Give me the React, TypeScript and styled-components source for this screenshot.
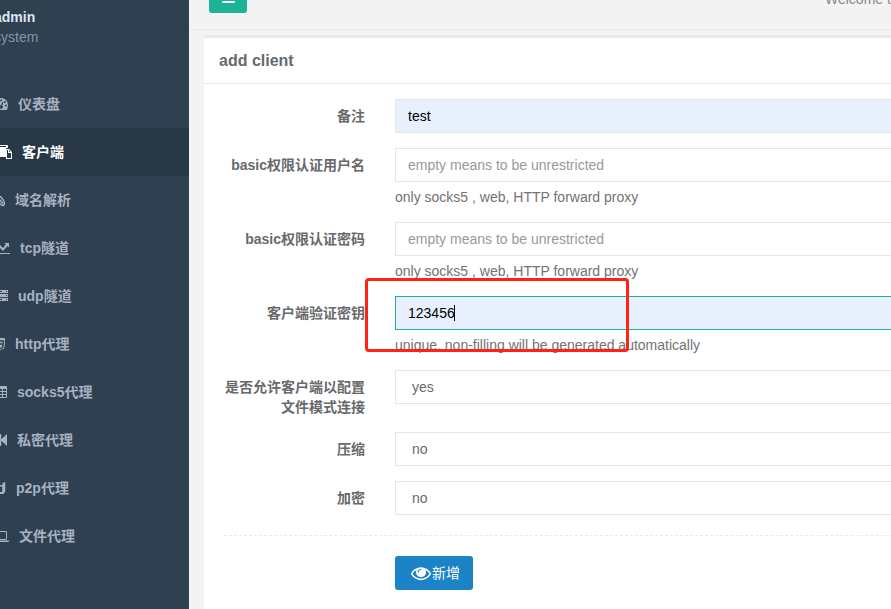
import React from "react";
import styled, { createGlobalStyle } from "styled-components";

const GlobalStyle = createGlobalStyle`
  * { box-sizing: border-box; }
  body {
    margin: 0;
    overflow: hidden;
    background: #f3f3f4;
    color: #676a6c;
    font: 14px/20px "Liberation Sans", Arial, "Noto Sans CJK SC", sans-serif;
  }
`;

const Shell = styled.div`
  display: flex;
  width: 891px;
  height: 609px;
  overflow: hidden;
`;

const Sidebar = styled.nav`
  flex: 0 0 220px;
  margin-left: -31px;
  height: 609px;
  background: #2f4050;
`;

const Profile = styled.div`
  height: 80px;
  padding: 7px 0 0 25px;
`;

const UserName = styled.div`
  color: #dfe4ed;
  font-weight: bold;
`;

const UserRole = styled.div`
  color: #8095a8;
`;

const MenuItem = styled.a<{ $active?: boolean }>`
  display: flex;
  align-items: center;
  gap: 10px;
  height: 48px;
  padding-left: ${(p) => (p.$active ? 29 : 25)}px;
  background: ${(p) => (p.$active ? "#293846" : "transparent")};
  color: ${(p) => (p.$active ? "#fff" : "#a7b1c2")};
  font-weight: bold;
  white-space: nowrap;
`;

const MenuIcon = styled.svg`
  flex: none;
  height: 14px;
  fill: currentColor;
`;

const Page = styled.main`
  flex: 1 0 0;
  min-width: 0;
  overflow: hidden;
`;

const TopBar = styled.header`
  display: flex;
  justify-content: space-between;
  height: 30px;
  padding-left: 20px;
  border-bottom: 1px solid #e7eaec;
`;

const Toggle = styled.button`
  display: flex;
  justify-content: center;
  width: 38px;
  height: 13px;
  padding: 1px 0 0;
  border: 0;
  border-radius: 0 0 3px 3px;
  background: #1ab394;
`;

const Bar = styled.span`
  width: 13px;
  height: 2px;
  border-radius: 1px;
  background: #fff;
`;

const Welcome = styled.span`
  flex: 0 0 66px;
  min-width: 0;
  margin-top: -11px;
  color: #888;
  white-space: nowrap;
`;

const Panel = styled.section`
  width: 900px;
  height: 580px;
  margin: 5px 0 0 15px;
  border-top: 3px solid #e7eaec;
  background: #fff;
`;

const PanelTitle = styled.h5`
  height: 46px;
  margin: 0;
  padding: 13px 15px 12px;
  border-bottom: 1px solid #e7eaec;
  font-size: 16px;
`;

const Form = styled.form`
  padding: 15px 20px;
`;

const Group = styled.div`
  display: grid;
  grid-template-columns: 141px 1fr;
  column-gap: 30px;
  margin-bottom: 15px;
`;

const Label = styled.label`
  padding-top: 7px;
  font-weight: bold;
  text-align: right;
`;

const Field = styled.div<{ $filled?: boolean; $focus?: boolean; $hint?: boolean; $select?: boolean }>`
  display: flex;
  align-items: center;
  height: 34px;
  padding-left: ${(p) => (p.$select ? 16 : 12)}px;
  border: 1px solid ${(p) => (p.$focus ? "#1ab394" : "#e5e6e7")};
  background: ${(p) => (p.$filled ? "#e8f0fe" : "#fff")};
  color: ${(p) => (p.$filled ? "#000" : p.$hint ? "#999" : "#676a6c")};
`;

const Caret = styled.span`
  width: 1px;
  height: 16px;
  margin-left: -1px;
  background: #000;
`;

const Help = styled.span`
  display: block;
  margin-top: 5px;
  color: #737373;
`;

const FocusArea = styled.div`
  position: relative;
`;

const Highlight = styled.div`
  position: absolute;
  top: -18px;
  left: -30px;
  width: 264px;
  height: 74px;
  border: 3px solid #ff2316;
  border-radius: 4px;
`;

const Divider = styled.hr`
  height: 0;
  margin: 20px 0;
  border: 0;
  border-top: 1px dashed #e7eaec;
`;

const Submit = styled.button`
  display: flex;
  align-items: center;
  gap: 1px;
  width: 78px;
  height: 34px;
  margin-left: 171px;
  padding: 0 0 0 16px;
  border: 0;
  border-radius: 3px;
  background: #1c84c6;
  color: #fff;
  font: inherit;
`;

const EyeIcon = () => (
  <svg width="20" height="20" viewBox="0 0 1792 1792" fill="currentColor">
    <path d="M1664 960q-152-236-381-353 61 104 61 225 0 185-131.5 316.5t-316.5 131.5-316.5-131.5-131.5-316.5q0-121 61-225-229 117-381 353 133 205 333.5 326.5t434.5 121.5 434.5-121.5 333.5-326.5zm-720-384q0-20-14-34t-34-14q-125 0-214.5 89.5t-89.5 214.5q0 20 14 34t34 14 34-14 14-34q0-86 61-147t147-61q20 0 34-14t14-34zm848 384q0 34-20 69-140 230-376.5 368.5t-499.5 138.5-499.5-139-376.5-368q-20-35-20-69t20-69q140-229 376.5-368t499.5-139 499.5 139 376.5 368q20 35 20 69z" />
  </svg>
);

type Entry = { text: string; width: number; icon: React.ReactNode; active?: boolean };

const entries: Entry[] = [
  {
    text: "仪表盘",
    width: 14,
    icon: (
      <path
        fillRule="evenodd"
        d="M7 1a7 7 0 0 1 7 7c0 1.800-.4 3.500-1.100 5H1.100A7 7 0 0 1 7 1ZM7 2.500a1 1 0 1 0 0 2 1 1 0 0 0 0-2ZM3.500 4a1 1 0 1 0 0 2 1 1 0 0 0 0-2ZM2 7.500a1 1 0 1 0 0 2 1 1 0 0 0 0-2ZM10.800 4a1 1 0 1 0 0 2 1 1 0 0 0 0-2ZM12 7.500a1 1 0 1 0 0 2 1 1 0 0 0 0-2ZM8.300 5 7 8.300a1.700 1.700 0 1 0 1.200.4L9.400 5.300Z"
      />
    ),
  },
  {
    text: "客户端",
    width: 14,
    active: true,
    icon: (
      <>
        <path fillRule="evenodd" d="M.8 0h8.400c.5 0 .8.300.8.800V3H8v9H.8c-.5 0-.8-.3-.8-.8V.8C0 .3.300 0 .8 0ZM2 1v1h6V1Z" />
        <path fillRule="evenodd" d="M8 4h3l3 3v7H8ZM9 5v8h4V8h-3V5Zm2 .5V7h1.500Z" />
      </>
    ),
  },
  {
    text: "域名解析",
    width: 11,
    icon: (
      <path
        d="M6 3.500c1.500.5 4.500 5 4.500 7 0 1.500-1 2.200-2 2-1.500-.3-4-4-5-6M5.500 6.500l3.300 4M3 4l3 3"
        fill="none"
        stroke="currentColor"
        strokeWidth="1.400"
        strokeLinecap="round"
      />
    ),
  },
  {
    text: "tcp隧道",
    width: 16,
    icon: (
      <path d="M0 1h1v11h15v1H0ZM10.500 2H15v4.500l-1.400-1.400L9 9.900 6 6.900l-3 3-1.500-1.500L6 4l3 3 2.900-3.500Z" />
    ),
  },
  {
    text: "udp隧道",
    width: 14,
    icon: (
      <path
        fillRule="evenodd"
        d="M0 1h14v3H0ZM1 2v1h7V2Zm11 0v1h1V2ZM0 5h14v3H0ZM1 6v1h4V6Zm11 0v1h1V6ZM0 9h14v3H0Zm1 1v1h7v-1Zm11 0v1h1v-1Z"
      />
    ),
  },
  {
    text: "http代理",
    width: 11,
    icon: (
      <path fillRule="evenodd" d="M0 1h11.400L10.300 11.500 5.500 13.500 1 12ZM2 3.300v1.400h6.700l-.2 1.600H2v1.400h6.200L8 10.200l-2 .8-3-.8v1.400l3 .8 3.300-1.200.9-7.900Z" />
    ),
  },
  {
    text: "socks5代理",
    width: 13,
    icon: (
      <path
        fillRule="evenodd"
        d="M1 1h11c.6 0 1 .4 1 1v10c0 .6-.4 1-1 1H1c-.6 0-1-.4-1-1V2c0-.6.400-1 1-1Zm0 3v2h3V4Zm4 0v2h3V4Zm4 0v2h3V4ZM1 7v2h3V7Zm4 0v2h3V7Zm4 0v2h3V7ZM1 10v2h3v-2Zm4 0v2h3v-2Zm4 0v2h3v-2Z"
      />
    ),
  },
  {
    text: "私密代理",
    width: 13,
    icon: <path d="M5 1h2.300v5.300L13 1v12L7.300 7.700V13H5Z" />,
  },
  {
    text: "p2p代理",
    width: 12,
    icon: <path d="M3 4h5.500V2L11.300 1v9.500L9.500 13H3v-2h5.200V5.600H3Z" />,
  },
  {
    text: "文件代理",
    width: 15,
    icon: (
      <path
        fillRule="evenodd"
        d="M3.200 2h8.600c.7 0 1.200.5 1.200 1.200v6.600c0 .7-.5 1.200-1.200 1.200H3.200C2.500 11 2 10.500 2 9.800V3.200C2 2.500 2.500 2 3.200 2ZM3 3v7h9V3ZM0 11.500h15v.8c0 .4-.6.700-1.200.7H1.200C.6 13 0 12.700 0 12.300Z"
      />
    ),
  },
];

export default function App() {
  return (
    <>
      <GlobalStyle />
      <Shell>
        <Sidebar>
          <Profile>
            <UserName>admin</UserName>
            <UserRole>system</UserRole>
          </Profile>
          {entries.map((entry) => (
            <MenuItem key={entry.text} $active={entry.active}>
              <MenuIcon width={entry.width} height="14" viewBox={`0 0 ${entry.width} 14`}>
                {entry.icon}
              </MenuIcon>
              <span>{entry.text}</span>
            </MenuItem>
          ))}
        </Sidebar>
        <Page>
          <TopBar>
            <Toggle aria-label="menu">
              <Bar />
            </Toggle>
            <Welcome>Welcome to</Welcome>
          </TopBar>
          <Panel>
            <PanelTitle>add client</PanelTitle>
            <Form>
              <Group>
                <Label>备注</Label>
                <Field $filled>test</Field>
              </Group>
              <Group>
                <Label>basic权限认证用户名</Label>
                <div>
                  <Field $hint>empty means to be unrestricted</Field>
                  <Help>only socks5 , web, HTTP forward proxy</Help>
                </div>
              </Group>
              <Group>
                <Label>basic权限认证密码</Label>
                <div>
                  <Field $hint>empty means to be unrestricted</Field>
                  <Help>only socks5 , web, HTTP forward proxy</Help>
                </div>
              </Group>
              <Group>
                <Label>客户端验证密钥</Label>
                <FocusArea>
                  <Field $filled $focus>
                    123456
                    <Caret />
                  </Field>
                  <Help>unique, non-filling will be generated automatically</Help>
                  <Highlight />
                </FocusArea>
              </Group>
              <Group>
                <Label>是否允许客户端以配置文件模式连接</Label>
                <Field $select>yes</Field>
              </Group>
              <Group>
                <Label>压缩</Label>
                <Field $select>no</Field>
              </Group>
              <Group>
                <Label>加密</Label>
                <Field $select>no</Field>
              </Group>
              <Divider />
              <Submit type="button">
                <EyeIcon />
                新增
              </Submit>
            </Form>
          </Panel>
        </Page>
      </Shell>
    </>
  );
}
